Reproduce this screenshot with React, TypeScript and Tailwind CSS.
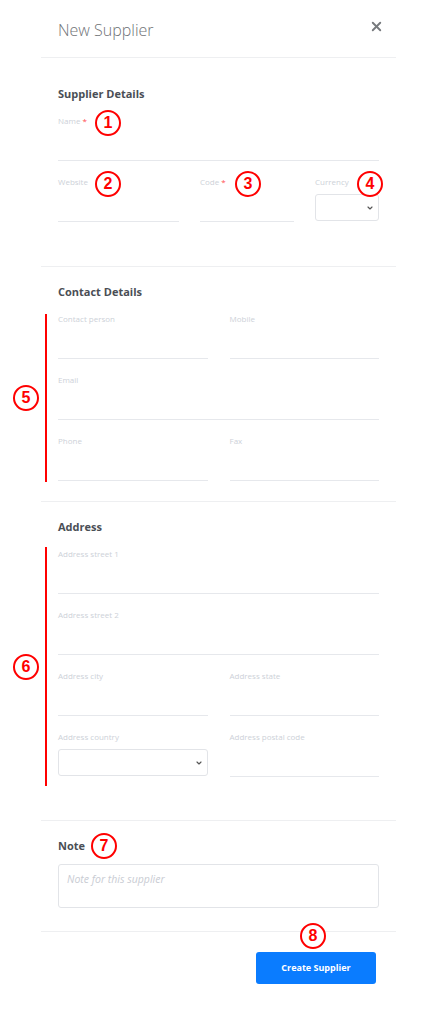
import { ChevronDown, X } from "lucide-react";

function Label({ text, required }: { text: string; required?: boolean }) {
  return (
    <div className="h-[10px] text-[8px] leading-[10px] text-[#cdd1d8] whitespace-nowrap">
      {text}
      {required && <span className="text-[#ff4d4f]"> *</span>}
    </div>
  );
}

function LineField({ label, required }: { label: string; required?: boolean }) {
  return (
    <div>
      <Label text={label} required={required} />
      <div className="h-[35px] border-b border-[#e6e8ec]" />
    </div>
  );
}

function SelectField({ label }: { label: string }) {
  return (
    <div>
      <Label text={label} />
      <div className="mt-[7px] h-[27px] rounded-[3px] border border-[#e2e4e8] flex items-center justify-end pr-[4px]">
        <ChevronDown size={8} strokeWidth={3.5} className="text-[#555]" />
      </div>
    </div>
  );
}

function SectionTitle({ children }: { children: React.ReactNode }) {
  return <h3 className="text-[11px] leading-[14px] font-bold text-[#4a4e55]">{children}</h3>;
}

function Marker({ n, className }: { n: number; className: string }) {
  return (
    <div
      className={`absolute w-[26px] h-[26px] rounded-full border-[2.5px] border-[#f00] bg-white flex items-center justify-center text-[16px] font-bold text-[#f00] ${className}`}
      style={{ fontFamily: "'Liberation Sans', Arial, sans-serif" }}
    >
      {n}
    </div>
  );
}

export default function App() {
  return (
    <main
      className="relative w-[436px] min-h-[1024px] bg-white"
      style={{ fontFamily: "'Open Sans', 'Noto Sans', sans-serif" }}
    >
      <div className="mx-[41px] w-[355px]">

        {/* HEADER */}

        <div className="h-[58px] border-b border-[#eeeff1] flex items-center justify-between pl-[17px] pr-[12px] pt-[3px]">
          <h1 className="text-[16px] font-light text-[#6f7276]">New Supplier</h1>
          <X size={15} strokeWidth={3} className="text-[#777a7e] -mt-[7px]" />
        </div>

        {/* SUPPLIER DETAILS */}

        <section className="px-[17px] pt-[29px] pb-[44px] border-b border-[#eeeff1]">
          <SectionTitle>Supplier Details</SectionTitle>
          <div className="mt-[15px]">
            <LineField label="Name" required />
          </div>
          <div className="mt-[16px] grid grid-cols-[121px_94px_1fr] gap-x-[21px]">
            <LineField label="Website" />
            <LineField label="Code" required />
            <SelectField label="Currency" />
          </div>
        </section>

        {/* CONTACT DETAILS */}

        <section className="px-[17px] pt-[18px] pb-[20px] border-b border-[#eeeff1]">
          <SectionTitle>Contact Details</SectionTitle>
          <div className="mt-[15px] grid grid-cols-2 gap-x-[22px] gap-y-[16px]">
            <LineField label="Contact person" />
            <LineField label="Mobile" />
            <div className="col-span-2">
              <LineField label="Email" />
            </div>
            <LineField label="Phone" />
            <LineField label="Fax" />
          </div>
        </section>

        {/* ADDRESS */}

        <section className="px-[17px] pt-[18px] pb-[43px] border-b border-[#eeeff1]">
          <SectionTitle>Address</SectionTitle>
          <div className="mt-[15px] grid grid-cols-2 gap-x-[22px] gap-y-[16px]">
            <div className="col-span-2">
              <LineField label="Address street 1" />
            </div>
            <div className="col-span-2">
              <LineField label="Address street 2" />
            </div>
            <LineField label="Address city" />
            <LineField label="Address state" />
            <SelectField label="Address country" />
            <LineField label="Address postal code" />
          </div>
        </section>

        {/* NOTE */}

        <section className="px-[17px] pt-[18px] pb-[23px] border-b border-[#eeeff1]">
          <SectionTitle>Note</SectionTitle>
          <div className="mt-[11px] h-[44px] rounded-[3px] border border-[#e2e4e8] px-[8px] pt-[7px] text-[10.5px] italic text-[#c9ccd3]">
            Note for this supplier
          </div>
        </section>

        {/* FOOTER */}

        <div className="flex justify-end pr-[20px] pt-[20px]">
          <button className="w-[120px] h-[32px] rounded-[3px] bg-[#0a7cff] text-white text-[9px] font-bold">
            Create Supplier
          </button>
        </div>

      </div>

      {/* ANNOTATIONS */}

      <div className="absolute left-[45px] top-[314px] w-[2px] h-[168px] bg-[#f00]" />
      <div className="absolute left-[45px] top-[547px] w-[2px] h-[239px] bg-[#f00]" />

      <Marker n={1} className="left-[95px] top-[110px]" />
      <Marker n={2} className="left-[95px] top-[171px]" />
      <Marker n={3} className="left-[235px] top-[171px]" />
      <Marker n={4} className="left-[357px] top-[171px]" />
      <Marker n={5} className="left-[13px] top-[385px]" />
      <Marker n={6} className="left-[13px] top-[654px]" />
      <Marker n={7} className="left-[91px] top-[833px]" />
      <Marker n={8} className="left-[300px] top-[923px]" />
    </main>
  );
}
